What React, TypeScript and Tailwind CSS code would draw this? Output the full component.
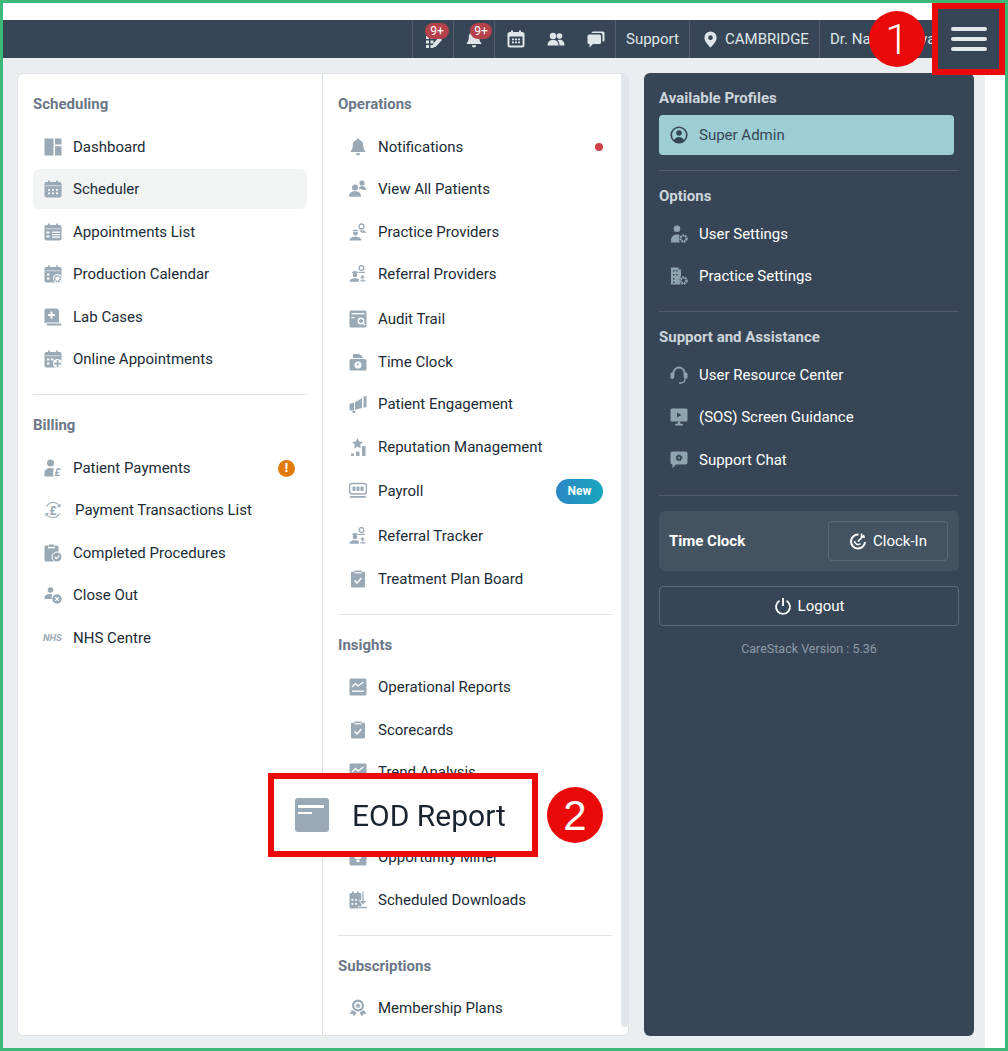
import type { ReactNode } from "react";

const W = "#ffffff";

function Svg({ children, className = "h-[18px] w-[18px]" }: { children: ReactNode; className?: string }) {
  return (
    <svg viewBox="0 0 18 18" fill="currentColor" className={`${className} shrink-0`}>
      {children}
    </svg>
  );
}

// calendar body shared by the scheduling icons
function CalBase({ children }: { children?: ReactNode }) {
  return (
    <>
      <rect x="0.5" y="2" width="17" height="15.5" rx="2" />
      <rect x="4" y="0.5" width="1.8" height="3" />
      <rect x="12.2" y="0.5" width="1.8" height="3" />
      <rect x="1.6" y="5.4" width="14.8" height="0.8" fill={W} opacity="0.7" />
      {children}
    </>
  );
}

const GearBadge = () => (
  <>
    <circle cx="13.5" cy="13.5" r="4.5" fill={W} />
    <circle cx="13.5" cy="13.5" r="2.9" fill="none" stroke="currentColor" strokeWidth="1.8" strokeDasharray="1.6 0.6" />
  </>
);

const icons: Record<string, ReactNode> = {
  dashboard: (
    <>
      <rect x="0.5" y="0.5" width="9" height="17" />
      <rect x="11" y="0.5" width="6.5" height="6" />
      <rect x="11" y="8.2" width="6.5" height="9.3" />
    </>
  ),
  scheduler: (
    <CalBase>
      <g fill={W}>
        <rect x="4" y="9" width="2" height="1.7" /><rect x="8" y="9" width="2" height="1.7" /><rect x="12" y="9" width="2" height="1.7" />
        <rect x="4" y="12.5" width="2" height="1.7" /><rect x="8" y="12.5" width="2" height="1.7" /><rect x="12" y="12.5" width="2" height="1.7" />
      </g>
    </CalBase>
  ),
  list: (
    <CalBase>
      <g fill={W}>
        <rect x="2.5" y="8.5" width="3" height="2" /><rect x="2.5" y="12.5" width="3" height="2" />
        <rect x="8" y="8.5" width="8" height="1.3" /><rect x="8" y="11" width="8" height="1.3" /><rect x="8" y="13.5" width="8" height="1.3" />
      </g>
    </CalBase>
  ),
  production: (
    <CalBase>
      <g fill={W}><rect x="3" y="8.5" width="2.5" height="2" /><rect x="3" y="12.5" width="2.5" height="2" /></g>
      <GearBadge />
    </CalBase>
  ),
  lab: (
    <>
      <path d="M2 0.5h10a3 3 0 0 1 3 3v11H2.5a2 2 0 0 0-2 1.5V2a1.5 1.5 0 0 1 1.5-1.5z" />
      <rect x="2.5" y="15.5" width="15" height="2" rx="1" />
      <path d="M6.5 3.5h2v2.5H11v2H8.5v2.5h-2V8H4V6h2.5z" fill={W} />
    </>
  ),
  online: (
    <CalBase>
      <g fill={W}><rect x="3" y="8.5" width="2.5" height="2" /><rect x="7" y="8.5" width="2.5" height="2" /><rect x="3" y="12.5" width="2.5" height="2" /></g>
      <circle cx="13.5" cy="13.5" r="4.5" fill={W} />
      <path d="M12.7 10h1.7v2.700h2.800v1.700h-2.800v2.800h-1.700v-2.800H10v-1.700h2.700z" />
    </CalBase>
  ),
  payments: (
    <>
      <circle cx="6.5" cy="4" r="3.5" />
      <path d="M0.5 17.5v-3.500c0-3 2.500-5 6-5 1.300 0 2.500 0.300 3.400 0.800-0.800 1.500-1 5-0.400 7.700z" />
      <text x="10.5" y="17" fontSize="10" fontStyle="italic" fontWeight="700" fontFamily="Roboto, sans-serif">£</text>
    </>
  ),
  transactions: (
    <>
      <path d="M2.5 5.500A7.500 7.500 0 0 1 15.500 5" fill="none" stroke="currentColor" strokeWidth="1.200" />
      <path d="M15.5 12.500A7.500 7.500 0 0 1 2.500 13" fill="none" stroke="currentColor" strokeWidth="1.200" />
      <path d="M16.5 2.500v3.500h-3.500z" /><path d="M1.500 15.500V12h3.500z" />
      <text x="9" y="13.500" fontSize="12" textAnchor="middle" fontWeight="700" fontFamily="Roboto, sans-serif">£</text>
    </>
  ),
  completed: (
    <>
      <path d="M2 1.500h3v-1h5v1h3a1.500 1.500 0 0 1 1.500 1.500v14.500H2A1.500 1.500 0 0 1 0.500 16V3A1.500 1.500 0 0 1 2 1.500z" />
      <rect x="4" y="2.800" width="7" height="1.500" fill={W} />
      <circle cx="13" cy="13" r="5" fill="currentColor" stroke={W} strokeWidth="1" />
      <path d="M10.800 13l1.600 1.600 2.900-3" fill="none" stroke={W} strokeWidth="1.200" />
    </>
  ),
  closeout: (
    <>
      <circle cx="6.500" cy="4" r="2.800" />
      <path d="M0.500 13v-1.500c0-2 2.500-3.500 5-3.500 1 0 2 0.200 2.800 0.600-0.600 1-0.800 3-0.500 4.400z" />
      <circle cx="13" cy="13" r="4.700" />
      <path d="M11.200 11.200l3.600 3.600m0-3.600l-3.600 3.600" stroke={W} strokeWidth="1.200" />
    </>
  ),
  bell: (
    <>
      <path d="M9 0.500a1.500 1.500 0 0 1 1.500 1.500c2.700 0.700 3.700 2.800 3.700 5.300 0 3 0.800 4.500 2 5.700v1H1.800v-1c1.200-1.200 2-2.700 2-5.700 0-2.500 1-4.600 3.700-5.300A1.500 1.500 0 0 1 9 0.500z" />
      <path d="M6.800 15.300h4.400a2.200 2.200 0 0 1-4.400 0z" />
    </>
  ),
  patients: (
    <>
      <circle cx="13" cy="3" r="2.600" />
      <path d="M9.800 9c0.500-2 1.700-3 3.200-3s3.800 1.200 4.500 3.800c-2 0.400-4.500 0-5.500-0.800z" />
      <circle cx="6" cy="7.500" r="3" />
      <path d="M0 16.800c0-3.800 2.500-5.500 6-5.500s6 1.700 6 5.500z" />
    </>
  ),
  providers: (
    <>
      <circle cx="12.500" cy="3.500" r="2.500" fill="none" stroke="currentColor" strokeWidth="1.300" />
      <path d="M10 7.500h5l3 2.200h-5z" />
      <path d="M3 8.500a4 4 0 0 1 7 0z" />
      <circle cx="6.500" cy="10.200" r="2.400" />
      <path d="M0.500 17.500c0-2.500 2.500-3.800 6-3.800s6 1.300 6 3.800z" />
      <rect x="3" y="8.300" width="7" height="0.800" fill={W} />
    </>
  ),
  referral: (
    <>
      <circle cx="12.500" cy="3" r="2.400" fill="none" stroke="currentColor" strokeWidth="1.300" />
      <path d="M9.500 6.800h5.500l1.500 1.200h-7z" />
      <path d="M2.500 8a4 4 0 0 1 7 0z" />
      <circle cx="6" cy="10" r="2.300" />
      <path d="M0.500 16.800c0-2.300 2-3.600 5.500-3.600 1.500 0 2.800 0.200 3.800 0.800v2.800z" />
      <path d="M13.500 10l2.500 2.400h-1.700v2.200h-1.600v-2.200H11z" />
      <path d="M11.500 15.200h5v1.300h-5z" />
    </>
  ),
  audit: (
    <>
      <rect x="0.500" y="0.500" width="17" height="17" rx="1.500" />
      <rect x="2.500" y="3" width="13" height="1.300" fill={W} />
      <rect x="2.500" y="7" width="3" height="1.300" fill={W} />
      <circle cx="12" cy="11" r="2.800" fill="none" stroke={W} strokeWidth="1.400" />
      <path d="M14 13l2 2" stroke={W} strokeWidth="1.500" />
    </>
  ),
  timeclock: (
    <>
      <path d="M5 1h3.500c3 0 5 1.800 5.500 4H4V2a1 1 0 0 1 1-1z" />
      <rect x="0.500" y="6" width="17" height="11.500" rx="1.500" />
      <circle cx="9" cy="12" r="3.500" fill={W} />
      <path d="M8.500 9.800h1v2.700H7.500v-0.900h1z" />
    </>
  ),
  megaphone: (
    <>
      <path d="M1.500 8.500l3.500-1v7.500l-3.500 0.500a1 1 0 0 1-1-1v-5.500a1 1 0 0 1 1-0.500z" />
      <path d="M6 7.200l7-4v9.800l-7 1.800z" />
      <path d="M14.500 1.800l3-1.300v11.500l-3 0.700z" />
      <path d="M3 15.800l3-0.400 0.500 2.600-2.500 0z" />
    </>
  ),
  star: (
    <>
      <path d="M8.500 0l1.600 3.600 3.900 0.400-2.900 2.600 0.800 3.900-3.400-2-3.400 2 0.800-3.900L3 4l3.900-0.400z" />
      <rect x="2" y="15.500" width="3" height="2.500" rx="0.500" />
      <rect x="7" y="13.500" width="3.500" height="4.500" rx="0.500" />
      <rect x="13" y="8" width="3.500" height="10" rx="0.500" />
    </>
  ),
  payroll: (
    <>
      <rect x="0.500" y="1.500" width="17" height="10.500" rx="2.500" fill="none" stroke="currentColor" strokeWidth="1.500" />
      <rect x="3.500" y="4.500" width="3" height="4.500" rx="0.800" />
      <rect x="7.500" y="4.500" width="3" height="4.500" rx="0.800" />
      <rect x="11.500" y="4.500" width="3" height="4.500" rx="0.800" />
      <rect x="1" y="14" width="16" height="1.800" rx="0.900" />
    </>
  ),
  clipboard: (
    <>
      <path d="M3 1.800h2.500V0.500h7v1.300H15a1 1 0 0 1 1 1v13.700a1 1 0 0 1-1 1H3a1 1 0 0 1-1-1V2.800a1 1 0 0 1 1-1z" />
      <rect x="5.500" y="2.200" width="7" height="1.200" fill={W} />
      <path d="M5.500 10.500l2.500 2.500 4.500-5" fill="none" stroke={W} strokeWidth="1.500" />
    </>
  ),
  chart: (
    <>
      <rect x="0.500" y="0.500" width="17" height="17" rx="1.500" />
      <path d="M3 9l3.500-3.500 2.500 2.500 5.500-4" fill="none" stroke={W} strokeWidth="1.300" />
      <rect x="3" y="12.500" width="12" height="1.400" fill={W} />
    </>
  ),
  bulb: (
    <>
      <rect x="0.500" y="0.500" width="17" height="17" rx="1.500" />
      <circle cx="9" cy="8" r="3.500" fill={W} />
      <rect x="7.500" y="12" width="3" height="2" fill={W} />
    </>
  ),
  downloads: (
    <>
      <rect x="0.500" y="2" width="12" height="15.500" rx="1.500" />
      <rect x="3" y="0.500" width="1.800" height="3" />
      <rect x="8" y="0.500" width="1.800" height="3" />
      <path d="M13 0h2v9.500h2.800L14 14l-3.800-4.500H13z" stroke={W} strokeWidth="0.800" />
      <rect x="9.500" y="15.500" width="8.500" height="2" stroke={W} strokeWidth="0.500" />
      <g fill={W}><rect x="2.500" y="8" width="1.800" height="1.800" /><rect x="6" y="8" width="1.800" height="1.800" /><rect x="2.500" y="12" width="1.800" height="1.800" /><rect x="6" y="12" width="1.800" height="1.800" /></g>
    </>
  ),
  membership: (
    <>
      <circle cx="9" cy="6.500" r="6" />
      <circle cx="9" cy="6.500" r="3.800" fill={W} />
      <path d="M9 3.800l0.900 1.800 2 0.300-1.500 1.300 0.400 2L9 8.300l-1.800 0.900 0.400-2-1.500-1.300 2-0.300z" />
      <path d="M3 11l-2.500 4 3-0.300L5 17.500l2.500-4z" />
      <path d="M15 11l2.500 4-3-0.300L13 17.500l-2.500-4z" />
    </>
  ),
  usersettings: (
    <>
      <circle cx="7" cy="3.800" r="3.300" />
      <path d="M1 17.500c-0.500-4 1-8 6-8 1.200 0 2 0.200 2.800 0.600-1.200 1.500-1.300 5 0 7.400z" />
      <circle cx="13.500" cy="13.500" r="3" fill="none" stroke="currentColor" strokeWidth="2.400" strokeDasharray="1.800 0.700" />
    </>
  ),
  practicesettings: (
    <>
      <path d="M1 0.500h7.500v2h2.500v6.500c-1.500 1.500-2 5-0.500 8.500H1z" />
      <g fill="#374656">
        <rect x="3" y="3" width="1.500" height="1.500" /><rect x="6" y="3" width="1.500" height="1.500" />
        <rect x="3" y="7" width="1.500" height="1.500" /><rect x="6" y="7" width="1.500" height="1.500" />
        <rect x="3" y="11" width="1.500" height="1.500" /><rect x="3" y="14.500" width="1.500" height="1.500" />
      </g>
      <circle cx="13.500" cy="13.500" r="3" fill="none" stroke="currentColor" strokeWidth="2.400" strokeDasharray="1.800 0.700" />
    </>
  ),
  headset: (
    <>
      <path d="M3.500 11V7a5.500 5.500 0 0 1 11 0v4" fill="none" stroke="currentColor" strokeWidth="1.800" />
      <rect x="0.500" y="6.500" width="3.500" height="6.500" rx="1.700" />
      <rect x="14" y="6.500" width="3.500" height="6.500" rx="1.700" />
      <path d="M15 13c0 2.500-2 4-4.500 4" fill="none" stroke="currentColor" strokeWidth="1.300" />
      <circle cx="10" cy="17" r="1" />
    </>
  ),
  screen: (
    <>
      <rect x="0.500" y="0.500" width="17" height="13" rx="1.500" />
      <path d="M7 4.500l4.500 2.500L7 9.500z" fill="#374656" />
      <rect x="7.800" y="13.500" width="2.400" height="2.500" />
      <rect x="5" y="15.800" width="8" height="1.700" rx="0.800" />
    </>
  ),
  chatgear: (
    <>
      <path d="M2.500 0.500h13a2 2 0 0 1 2 2v9a2 2 0 0 1-2 2H6l-3.500 4v-4a2 2 0 0 1-2-2v-9a2 2 0 0 1 2-2z" />
      <circle cx="9" cy="6.800" r="1.900" fill="none" stroke="#374656" strokeWidth="1.800" />
      <circle cx="9" cy="6.800" r="3" fill="none" stroke="#374656" strokeWidth="1" strokeDasharray="1.200 1.200" />
    </>
  ),
};

function Icon({ name }: { name: string }) {
  return <Svg>{icons[name]}</Svg>;
}

type Item = { label: string; icon: string; mt: string; shift?: boolean; active?: boolean; extra?: ReactNode };

function Row({ item }: { item: Item }) {
  return (
    <div className={`${item.mt} flex h-10 items-center rounded-md pl-[11px] pr-[9px] text-[#9aa9b6] ${item.active ? "bg-[#f2f3f3]" : ""}`}>
      <Icon name={item.icon} />
      <span className={`${item.shift ? "ml-[13px]" : "ml-[11px]"} flex-1 text-[15px] text-[#212b36]`}>{item.label}</span>
      {item.extra}
    </div>
  );
}

function Heading({ children, className = "" }: { children: ReactNode; className?: string }) {
  return <h3 className={`h-5 text-[15px] font-bold leading-5 text-[#6b7787] ${className}`}>{children}</h3>;
}

const scheduling: Item[] = [
  { label: "Dashboard", icon: "dashboard", mt: "mt-[13px]" },
  { label: "Scheduler", icon: "scheduler", mt: "mt-[2px]", active: true },
  { label: "Appointments List", icon: "list", mt: "mt-[3px]" },
  { label: "Production Calendar", icon: "production", mt: "mt-[2px]" },
  { label: "Lab Cases", icon: "lab", mt: "mt-[3px]" },
  { label: "Online Appointments", icon: "online", mt: "mt-[2px]" },
];

const billing: Item[] = [
  {
    label: "Patient Payments",
    icon: "payments",
    mt: "mt-[13px]",
    extra: (
      <span className="mr-[3px] flex h-[17px] w-[17px] items-center justify-center rounded-full bg-[#e07b0c] text-[12px] font-black text-white">!</span>
    ),
  },
  { label: "Payment Transactions List", icon: "transactions", mt: "mt-[2px]", shift: true },
  { label: "Completed Procedures", icon: "completed", mt: "mt-[3px]" },
  { label: "Close Out", icon: "closeout", mt: "mt-[2px]" },
  { label: "NHS Centre", icon: "nhs", mt: "mt-[3px]" },
];

const operations: Item[] = [
  {
    label: "Notifications",
    icon: "bell",
    mt: "mt-[13px]",
    extra: <span className="h-2 w-2 rounded-full bg-[#d1404a]" />,
  },
  { label: "View All Patients", icon: "patients", mt: "mt-[2px]" },
  { label: "Practice Providers", icon: "providers", mt: "mt-[3px]" },
  { label: "Referral Providers", icon: "referral", mt: "mt-[2px]" },
  { label: "Audit Trail", icon: "audit", mt: "mt-[5px]" },
  { label: "Time Clock", icon: "timeclock", mt: "mt-[3px]" },
  { label: "Patient Engagement", icon: "megaphone", mt: "mt-[2px]" },
  { label: "Reputation Management", icon: "star", mt: "mt-[3px]" },
  {
    label: "Payroll",
    icon: "payroll",
    mt: "mt-[4px]",
    extra: (
      <span className="flex h-[25px] w-[47px] items-center justify-center rounded-full bg-gradient-to-r from-[#2a86c5] to-[#17a6bd] text-[12px] font-bold text-white">New</span>
    ),
  },
  { label: "Referral Tracker", icon: "referral", mt: "mt-[5px]" },
  { label: "Treatment Plan Board", icon: "clipboard", mt: "mt-[3px]" },
];

const insights: Item[] = [
  { label: "Operational Reports", icon: "chart", mt: "mt-[12px]" },
  { label: "Scorecards", icon: "clipboard", mt: "mt-[3px]" },
  { label: "Trend Analysis", icon: "chart", mt: "mt-[2px]" },
  { label: "EOD Report", icon: "chart", mt: "mt-[2px]" },
  { label: "Opportunity Miner", icon: "bulb", mt: "mt-[3px]" },
  { label: "Scheduled Downloads", icon: "downloads", mt: "mt-[3px]" },
];

function Section({ items }: { items: Item[] }) {
  return (
    <>
      {items.map((item) =>
        item.icon === "nhs" ? (
          <div key={item.label} className={`${item.mt} flex h-10 items-center pl-[10px]`}>
            <span className="w-[20px] text-[9.5px] font-bold italic text-[#9aa9b6]">NHS</span>
            <span className="ml-[10px] text-[15px] text-[#212b36]">{item.label}</span>
          </div>
        ) : (
          <Row key={item.label} item={item} />
        ),
      )}
    </>
  );
}

function DarkRow({ icon, label, mt }: { icon: string; label: string; mt: string }) {
  return (
    <div className={`${mt} flex h-10 items-center pl-[11px] text-[#8fa3b0]`}>
      <Icon name={icon} />
      <span className="ml-[11px] text-[15px] text-white">{label}</span>
    </div>
  );
}

function DarkHeading({ children, className = "" }: { children: ReactNode; className?: string }) {
  return <h3 className={`h-5 text-[15px] font-bold leading-5 text-[#cdd5dc] ${className}`}>{children}</h3>;
}

function HeaderCell({ children, className = "" }: { children: ReactNode; className?: string }) {
  return <div className={`relative flex h-full items-center border-l border-[#52606e] ${className}`}>{children}</div>;
}

function Badge({ className }: { className: string }) {
  return (
    <span className={`absolute flex h-4 items-center justify-center rounded-full bg-[#b5414a] text-[12px] leading-none text-white ${className}`}>9+</span>
  );
}

function TopBar() {
  return (
    <header className="flex h-[38px] items-center justify-end bg-[#374656] pr-[51px] text-[15px] text-[#dfe6ea]">
      <HeaderCell className="w-[41px] justify-center">
        <Svg>
          <rect x="2" y="6" width="3" height="3" /><rect x="6.5" y="6" width="3" height="3" />
          <rect x="2" y="10.5" width="3" height="3" /><rect x="6.5" y="10.5" width="3" height="3" />
          <rect x="2" y="15" width="3" height="3" /><rect x="6.5" y="15" width="3" height="3" />
          <path d="M15 7l3 3-6.500 7H9v-3z" />
        </Svg>
        <Badge className="left-[12px] top-[3px] w-[24px]" />
      </HeaderCell>
      <HeaderCell className="w-[41px] justify-center">
        <Svg>{icons.bell}</Svg>
        <Badge className="left-[16px] top-[3px] w-[22px]" />
      </HeaderCell>
      <HeaderCell className="w-[121px] gap-[22px] pl-[12px]">
        <Svg>
          <rect x="0.5" y="2" width="17" height="15.5" rx="2.5" />
          <rect x="4" y="0.5" width="2" height="3" />
          <rect x="12" y="0.5" width="2" height="3" />
          <rect x="2.5" y="6.5" width="13" height="9" rx="0.5" fill="#374656" />
          <rect x="5" y="8.5" width="2" height="1.8" /><rect x="8" y="8.5" width="2" height="1.8" /><rect x="11" y="8.5" width="2" height="1.8" />
          <rect x="5" y="11.500" width="2" height="1.800" /><rect x="8" y="11.500" width="2" height="1.800" /><rect x="11" y="11.500" width="2" height="1.800" />
        </Svg>
        <Svg>
          <circle cx="6" cy="6" r="3.200" />
          <circle cx="12.500" cy="6" r="2.800" />
          <path d="M0.500 15.500c0-3.500 2-5.500 5.500-5.500s5.500 2 5.500 5.500z" />
          <path d="M12.500 15.500c0-2-0.500-4-2-5.300 0.700-0.300 1.300-0.400 2-0.400 3 0 5 2 5 5.700z" />
        </Svg>
        <Svg>
          <path d="M6 1.500h10a1.500 1.500 0 0 1 1.500 1.500v7a1.500 1.500 0 0 1-1.500 1.500h-0.500V5a2 2 0 0 0-2-2H4.500A1.500 1.500 0 0 1 6 1.500z" />
          <path d="M2 4.500h10.500A1.500 1.500 0 0 1 14 6v6.500a1.500 1.500 0 0 1-1.500 1.500H6l-3.500 3.500V14H2a1.500 1.500 0 0 1-1.500-1.500V6A1.500 1.500 0 0 1 2 4.500z" />
        </Svg>
      </HeaderCell>
      <HeaderCell className="w-[74px] pl-[10px]">Support</HeaderCell>
      <HeaderCell className="w-[130px] pl-[13px]">
        <svg viewBox="0 0 16 18" fill="currentColor" className="h-[17px] w-[15px] shrink-0">
          <path fillRule="evenodd" d="M8 0.500a6.500 6.500 0 0 1 6.500 6.500c0 4.300-4.300 8-6.500 10.500C5.800 15 1.500 11.300 1.500 7A6.500 6.500 0 0 1 8 0.500zM8 4.500a2.500 2.500 0 1 0 0 5 2.500 2.500 0 0 0 0-5z" />
        </svg>
        <span className="ml-[7px]">CAMBRIDGE</span>
      </HeaderCell>
      <HeaderCell className="w-[115px] overflow-hidden whitespace-nowrap pl-[10px]">Dr. Nathan Silva</HeaderCell>
    </header>
  );
}

export default function App() {
  return (
    <div className="relative h-[1051px] w-[1008px] overflow-hidden border-[3px] border-[#3cb878] bg-white font-['Roboto',sans-serif]">
      <div className="mr-[20px] flex h-full flex-col pt-[17px]">
        <TopBar />
        <main className="flex flex-1 gap-[15px] bg-[#eaeef1] pb-[12px] pl-[14px] pt-[15px]">
          <div className="flex w-[612px] overflow-hidden rounded-md border border-[#dfe3e7] bg-white">
            <section className="w-[305px] border-r border-[#d8dee4] px-[15px] pt-[20px]">
              <Heading>Scheduling</Heading>
              <Section items={scheduling} />
              <hr className="mt-[15px] border-[#dfe4e9]" />
              <Heading className="mt-[20px]">Billing</Heading>
              <Section items={billing} />
            </section>
            <section className="w-[298px] pl-[15px] pr-[9px] pt-[20px]">
              <Heading>Operations</Heading>
              <Section items={operations} />
              <hr className="mt-[15px] border-[#dfe4e9]" />
              <Heading className="mt-[20px]">Insights</Heading>
              <Section items={insights} />
              <hr className="mt-[15px] border-[#dfe4e9]" />
              <Heading className="mt-[20px]">Subscriptions</Heading>
              <Section items={[{ label: "Membership Plans", icon: "membership", mt: "mt-[12px]" }]} />
            </section>
            <div className="mb-[8px] flex-1 rounded-b-md bg-[#e2e6ea]" />
          </div>
          <aside className="w-[330px] rounded-md bg-[#374656] px-[15px] pt-[15px]">
            <DarkHeading>Available Profiles</DarkHeading>
            <div className="mt-[7px] flex h-10 w-[295px] items-center rounded bg-[#9dced4] pl-[11px] text-[#374656]">
              <svg viewBox="0 0 18 18" className="h-[18px] w-[18px] shrink-0">
                <circle cx="9" cy="9" r="7.8" fill="none" stroke="currentColor" strokeWidth="1.6" />
                <circle cx="9" cy="7" r="2.8" fill="currentColor" />
                <path d="M3.800 14.500c0.800-2.300 2.800-3.500 5.200-3.500s4.400 1.200 5.200 3.500A7 7 0 0 1 9 16.500a7 7 0 0 1-5.200-2z" fill="currentColor" />
              </svg>
              <span className="ml-[11px] text-[15px]">Super Admin</span>
            </div>
            <hr className="mt-[15px] border-[#52606e]" />
            <DarkHeading className="mt-[15px]">Options</DarkHeading>
            <DarkRow icon="usersettings" label="User Settings" mt="mt-[8px]" />
            <DarkRow icon="practicesettings" label="Practice Settings" mt="mt-[2px]" />
            <hr className="mt-[15px] border-[#52606e]" />
            <DarkHeading className="mt-[15px]">Support and Assistance</DarkHeading>
            <DarkRow icon="headset" label="User Resource Center" mt="mt-[8px]" />
            <DarkRow icon="screen" label="(SOS) Screen Guidance" mt="mt-[2px]" />
            <DarkRow icon="chatgear" label="Support Chat" mt="mt-[3px]" />
            <hr className="mt-[15px] border-[#52606e]" />
            <div className="mt-[15px] flex h-[60px] items-center justify-between rounded-md bg-[#435362] pl-[10px] pr-[11px]">
              <span className="text-[15px] font-bold text-white">Time Clock</span>
              <button className="flex h-10 w-[120px] items-center justify-center gap-[6px] rounded border border-[#5c6b7a] text-[15px] text-white">
                <svg viewBox="0 0 18 18" fill="none" stroke="currentColor" strokeWidth="2" className="h-[18px] w-[18px]">
                  <path d="M9.500 2.500A7 7 0 1 0 16 10" />
                  <path d="M9 9.500l6-6.500" strokeWidth="1.800" />
                  <path d="M12.500 1.500v3.500h3.500" strokeWidth="1.500" />
                  <path d="M5.500 9a3.500 3.500 0 0 0 6 2.500" strokeWidth="1.500" />
                </svg>
                Clock-In
              </button>
            </div>
            <button className="mt-[15px] flex h-10 w-full items-center justify-center gap-[6px] rounded border border-[#5c6b7a] text-[15px] text-white">
              <svg viewBox="0 0 18 18" fill="none" stroke="currentColor" strokeWidth="1.800" className="h-[18px] w-[18px]">
                <path d="M5.500 3.800a7 7 0 1 0 7 0" />
                <path d="M9 1v8" />
              </svg>
              Logout
            </button>
            <p className="mt-[14px] text-center text-[12.5px] text-[#8c9ba8]">CareStack Version : 5.36</p>
          </aside>
        </main>
      </div>

      {/* callouts pasted on top of the screenshot */}
      <div className="absolute left-[929px] top-0 flex h-[72px] w-[73px] flex-col items-center justify-center gap-[6.5px] border-[6px] border-[#ea0a0a] bg-[#374656]">
        <span className="h-[3.5px] w-9 rounded-full bg-[#e4e7ea] blur-[0.4px]" />
        <span className="h-[3.5px] w-9 rounded-full bg-[#e4e7ea] blur-[0.4px]" />
        <span className="h-[3.5px] w-9 rounded-full bg-[#e4e7ea] blur-[0.4px]" />
      </div>
      <div className="absolute left-[866px] top-[8px] flex h-14 w-14 items-center justify-center rounded-full bg-[#ea0a0a] text-[42px] font-light text-white">1</div>
      <div className="absolute left-[265px] top-[770px] flex h-[84px] w-[270px] items-center gap-[23px] border-[6px] border-[#ea0a0a] bg-white pl-[21px]">
        <svg viewBox="0 0 34 34" className="h-[34px] w-[34px] text-[#9aa9b6] blur-[0.5px]">
          <rect width="34" height="34" rx="3" fill="currentColor" />
          <rect x="3" y="7" width="26" height="3" fill="#ffffff" />
          <rect x="3" y="14" width="14" height="2" fill="#ffffff" />
        </svg>
        <span className="text-[30px] text-[#1a2330] blur-[0.5px]">EOD Report</span>
      </div>
      <div className="absolute left-[544px] top-[784px] flex h-14 w-14 items-center justify-center rounded-full bg-[#ea0a0a] font-['Liberation_Sans',sans-serif] text-[42px] text-white">2</div>
    </div>
  );
}
